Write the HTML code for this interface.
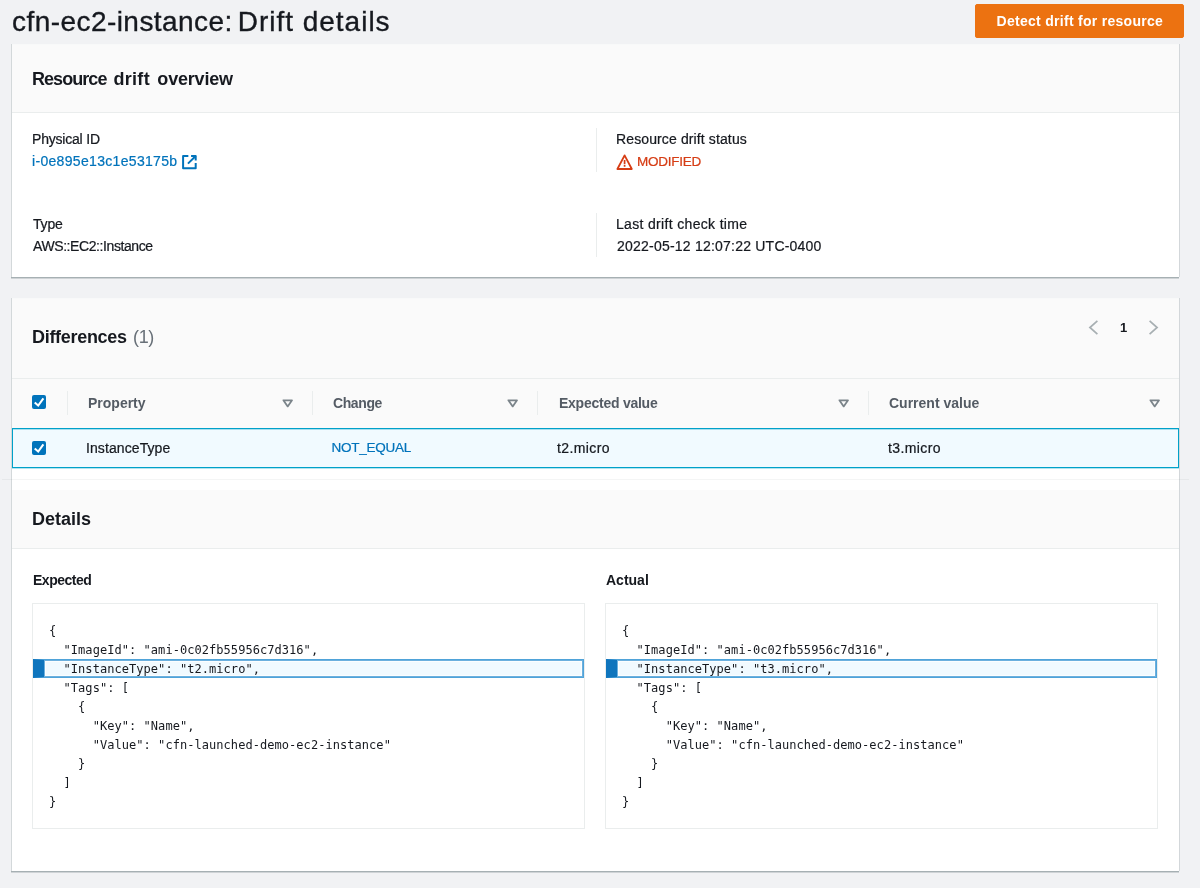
<!DOCTYPE html>
<html lang="en">
<head>
<meta charset="utf-8">
<title>cfn-ec2-instance: Drift details</title>
<style>
*{box-sizing:border-box;margin:0;padding:0}
html,body{width:1200px;height:888px;overflow:hidden}
body{will-change:transform;background:#f1f2f4;font-family:"Liberation Sans",Arial,sans-serif;color:#16191f;font-size:14px;position:relative}
.t{position:absolute;white-space:nowrap;line-height:20px;height:20px;z-index:8}
.t{-webkit-text-stroke:.22px}
.b,h2.t,.th,.btn .t{font-weight:700;-webkit-text-stroke:0}
.card{position:absolute;left:11px;width:1168px;background:#fff;box-shadow:0 1px 0 0 rgba(0,28,36,.2),0 2px 0 0 rgba(0,28,36,.14),1px 0 0 0 rgba(0,28,36,.12);border-top:1px solid #f8f9f9}
.card::after{content:"";position:absolute;left:0;top:-1px;bottom:0;width:1px;background:#d3d8da;z-index:5}
.hd{position:absolute;left:0;right:0;top:0;background:#fafafa;border-bottom:1px solid #eaeded}
h1.t{font-size:28px;font-weight:400;line-height:34px;height:34px;color:#16191f;-webkit-text-stroke:.35px #16191f}
h2.t{font-size:18px;font-weight:700;line-height:22px;height:22px}
.cnt{font-weight:400;color:#687078}
.btn{position:absolute;left:975px;top:4px;width:209px;height:34px;background:#ec7211;border:1px solid #ec7211;border-radius:2px;color:#fff;font-weight:700;font-size:14px}
.lnk{color:#0073bb}
.warn{color:#d63d15}
.vr{position:absolute;width:1px;background:#eaeded}
.th{color:#545b64;font-weight:700}
.cb{position:absolute;width:14px;height:14px;background:#0073bb;border-radius:2px}
.cb svg{position:absolute;left:0;top:0}
.row{position:absolute;left:1px;width:1167px;background:#f1faff;border:1px solid #00a1c9;box-shadow:inset 0 1px 0 rgba(0,161,201,.3),0 1px 0 rgba(0,161,201,.3);z-index:6}
.tri{position:absolute}
.code{position:absolute;width:553px;height:226px;border:1px solid #eaeded;background:#fff}
.code pre{position:absolute;left:16px;top:18px;letter-spacing:.05px;font-family:"DejaVu Sans Mono","Liberation Mono",monospace;font-size:12px;line-height:19px;color:#16191f}
.hl{position:absolute;left:0;width:551px;height:19px;top:55px;background:#f1faff;border:1px solid #4fa3d9;border-left:11px solid #0f75bd;box-shadow:inset 0 0 0 1px rgba(47,143,208,.7),inset 0 0 0 2px rgba(255,255,255,.75)}
</style>
</head>
<body>

<h1 class="t" id="title" style="left:12px;top:4.5px"><span id="t1" style="letter-spacing:.445px">cfn-ec2-instance:</span> <span id="t2" style="letter-spacing:.99px;margin-left:-2.9px">Drift details</span></h1>
<div class="btn"><span class="t" id="btnt" style="left:20.6px;top:6.4px;letter-spacing:.28px">Detect drift for resource</span></div>

<!-- Resource drift overview -->
<section class="card" style="top:44px;height:233px">
  <div class="hd" style="height:68px"></div>
  <h2 class="t" id="h_over" style="left:21px;top:23px"><span id="ho1" style="letter-spacing:-.95px">Resource</span> <span id="ho2" style="letter-spacing:.3px;margin-left:2px">drift</span> <span id="ho3" style="letter-spacing:-.2px;margin-left:2.4px">overview</span></h2>

  <span class="t" id="l_pid" style="left:21px;top:84px;letter-spacing:-.2px">Physical ID</span>
  <a class="t lnk" id="v_pid" style="left:21px;top:106px;letter-spacing:.32px">i-0e895e13c1e53175b</a>
  <svg class="tri" style="left:170.25px;top:108.5px" width="16.8" height="16.3" viewBox="0 0 16 16" preserveAspectRatio="none" fill="none" stroke="#0073bb" stroke-width="1.9" stroke-linejoin="round"><path d="M14 8.8V14H2V2h5"/><path d="M9.6 2H14v4.4"/><path d="M14 2L6.6 9.4"/></svg>

  <span class="t" id="l_type" style="left:22px;top:169px;letter-spacing:-.17px">Type</span>
  <span class="t" id="v_type" style="left:22px;top:191px;letter-spacing:-.41px">AWS::EC2::Instance</span>

  <div class="vr" style="left:585px;top:83px;height:44px"></div>
  <div class="vr" style="left:585px;top:168px;height:44px"></div>

  <span class="t" id="l_stat" style="left:605px;top:84px;letter-spacing:.12px">Resource drift status</span>
  <svg class="tri" style="left:605px;top:108px" width="18" height="18" viewBox="0 0 18 18" fill="none" stroke="#d63d15" stroke-width="1.8" stroke-linejoin="round"><path d="M8.6 2.4L15.8 16H1.4z"/><path d="M8.6 6.9v4.4M8.6 12.1v1.6" stroke-width="1.7"/></svg>
  <span class="t warn" id="v_stat" style="left:626px;top:106.5px;letter-spacing:-.25px;font-size:13.5px">MODIFIED</span>

  <span class="t" id="l_time" style="left:605px;top:169px;letter-spacing:.33px">Last drift check time</span>
  <span class="t" id="v_time" style="left:606px;top:191px;letter-spacing:.22px">2022-05-12 12:07:22 UTC-0400</span>
</section>

<!-- Differences + Details -->
<section class="card" style="top:298px;height:573px">
  <div class="hd" style="height:80px"></div>
  <h2 class="t" id="h_diff" style="left:21px;top:27px"><span id="h_diffx" style="letter-spacing:-.3px">Differences</span> <span class="cnt" id="h_cnt" style="margin-left:1.2px;letter-spacing:-.3px">(1)</span></h2>

  <svg class="tri" style="left:1077px;top:20px" width="12" height="17" viewBox="0 0 12 17" fill="none" stroke="#a7afb2" stroke-width="1.7"><path d="M9.4 1.8L1.9 8.5l7.5 6.7"/></svg>
  <span class="t b" id="pg1" style="left:1109px;top:19px;font-size:13px">1</span>
  <svg class="tri" style="left:1137px;top:20px" width="12" height="17" viewBox="0 0 12 17" fill="none" stroke="#a7afb2" stroke-width="1.7"><path d="M1.6 1.8L9.1 8.5l-7.5 6.7"/></svg>

  <!-- table header -->
  <div class="hd" style="top:80px;height:50px;border-bottom:0"></div>
  <div class="cb" style="left:21px;top:96px"><svg width="14" height="14" viewBox="0 0 14 14" fill="none" stroke="#fff" stroke-width="2"><path d="M2.7 7.5L6.2 10.6L11.4 3.3"/></svg></div>
  <div class="vr" style="left:56px;top:92px;height:24px"></div>
  <span class="t th" id="th1" style="left:77px;top:94px">Property</span>
  <svg class="tri" style="left:271px;top:99.5px" width="12" height="9" viewBox="0 0 12 9" fill="none" stroke="#7b848a" stroke-width="1.8" stroke-linejoin="round"><path d="M1.4 1.3H10L5.7 7.4z"/></svg>
  <div class="vr" style="left:301px;top:92px;height:24px"></div>
  <span class="t th" id="th2" style="left:322px;top:94px;letter-spacing:-.4px">Change</span>
  <svg class="tri" style="left:496px;top:99.5px" width="12" height="9" viewBox="0 0 12 9" fill="none" stroke="#7b848a" stroke-width="1.8" stroke-linejoin="round"><path d="M1.4 1.3H10L5.7 7.4z"/></svg>
  <div class="vr" style="left:526px;top:92px;height:24px"></div>
  <span class="t th" id="th3" style="left:548px;top:94px;letter-spacing:-.25px">Expected value</span>
  <svg class="tri" style="left:827px;top:99.5px" width="12" height="9" viewBox="0 0 12 9" fill="none" stroke="#7b848a" stroke-width="1.8" stroke-linejoin="round"><path d="M1.4 1.3H10L5.7 7.4z"/></svg>
  <div class="vr" style="left:857px;top:92px;height:24px"></div>
  <span class="t th" id="th4" style="left:878px;top:94px">Current value</span>
  <svg class="tri" style="left:1138px;top:99.5px" width="12" height="9" viewBox="0 0 12 9" fill="none" stroke="#7b848a" stroke-width="1.8" stroke-linejoin="round"><path d="M1.4 1.3H10L5.7 7.4z"/></svg>

  <!-- selected row -->
  <div class="row" style="top:129px;height:40px"></div>
  <div class="cb" style="left:21px;top:141.5px;z-index:7"><svg width="14" height="14" viewBox="0 0 14 14" fill="none" stroke="#fff" stroke-width="2"><path d="M2.7 7.5L6.2 10.6L11.4 3.3"/></svg></div>
  <span class="t" id="td1" style="left:75px;top:139px;letter-spacing:.09px">InstanceType</span>
  <span class="t lnk" id="td2" style="left:320.5px;top:139px;letter-spacing:-.25px;font-size:13.5px">NOT_EQUAL</span>
  <span class="t" id="td3" style="left:546px;top:139px;letter-spacing:.39px">t2.micro</span>
  <span class="t" id="td4" style="left:877px;top:139px;letter-spacing:.39px">t3.micro</span>

  <!-- Details -->
  <div class="hd" style="top:191px;height:59px"></div>
  <h2 class="t" id="h_det" style="left:21px;top:209px">Details</h2>

  <span class="t b" id="l_exp" style="left:22px;top:271px;letter-spacing:-.49px">Expected</span>
  <span class="t b" id="l_act" style="left:595px;top:271px">Actual</span>

  <div class="code" style="left:21px;top:304px">
    <div class="hl"></div>
<pre id="code1">{
  "ImageId": "ami-0c02fb55956c7d316",
  "InstanceType": "t2.micro",
  "Tags": [
    {
      "Key": "Name",
      "Value": "cfn-launched-demo-ec2-instance"
    }
  ]
}</pre>
  </div>
  <div class="code" style="left:594px;top:304px">
    <div class="hl"></div>
<pre id="code2">{
  "ImageId": "ami-0c02fb55956c7d316",
  "InstanceType": "t3.micro",
  "Tags": [
    {
      "Key": "Name",
      "Value": "cfn-launched-demo-ec2-instance"
    }
  ]
}</pre>
  </div>
</section>

<div style="position:absolute;left:2px;top:479px;width:1187px;height:1px;background:rgba(0,20,30,.045);z-index:9"></div>

</body>
</html>
